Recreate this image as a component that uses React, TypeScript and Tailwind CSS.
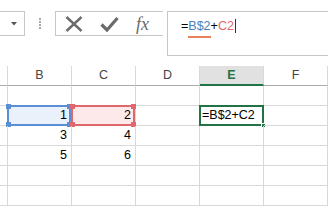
import React from 'react'

const font = { fontFamily: '"Liberation Sans", Arial, sans-serif' }

const cols = ['A', 'B', 'C', 'D', 'E', 'F']
const widths = ['w-[8px]', 'w-[64px]', 'w-[64px]', 'w-[64px]', 'w-[64px]', 'w-[64px]']

const rows: Record<number, string[]> = {
  1: ['', '', '', '', '', ''],
  2: ['', '1', '2', '', '=B$2+C2', ''],
  3: ['', '3', '4', '', '', ''],
  4: ['', '5', '6', '', '', ''],
  5: ['', '', '', '', '', ''],
  6: ['', '', '', '', '', ''],
}

function Corners({ color }: { color: string }) {
  return (
    <>
      <span className={`absolute -left-[3px] -top-[3px] h-[5px] w-[5px] ${color}`} />
      <span className={`absolute -right-[3px] -top-[3px] h-[5px] w-[5px] ${color}`} />
      <span className={`absolute -left-[3px] -bottom-[3px] h-[5px] w-[5px] ${color}`} />
      <span className={`absolute -right-[3px] -bottom-[3px] h-[5px] w-[5px] ${color}`} />
    </>
  )
}

function Cell({ row, col, value }: { row: number; col: number; value: string }) {
  const isFormula = value.startsWith('=')
  return (
    <div
      className={`relative flex h-[20px] shrink-0 items-center border-r border-b border-[#d9d9d9] ${widths[col]} ${
        isFormula ? 'justify-start pl-[2px]' : 'justify-end pr-[4px]'
      }`}
    >
      {row === 2 && col === 1 && (
        <div className="absolute -left-px -top-px bottom-[-1px] right-0 border-2 border-[#5b8fd3] bg-[#eaf1fb]">
          <Corners color="bg-[#5b8fd3]" />
        </div>
      )}
      {row === 2 && col === 2 && (
        <div className="absolute -left-px -top-px bottom-[-1px] right-0 border-2 border-[#e0676b] bg-[#fde9e9]">
          <Corners color="bg-[#e0676b]" />
        </div>
      )}
      {row === 2 && col === 4 && (
        <div className="absolute -left-px -top-px bottom-[-1px] right-[-1px] border-2 border-[#217346]">
          <span className="absolute -right-[4px] -bottom-[4px] h-[5px] w-[5px] border border-white bg-[#217346]" />
        </div>
      )}
      <span className="relative text-[12.5px] leading-none text-black">{value}</span>
    </div>
  )
}

export default function App() {
  return (
    <div className="h-[210px] w-[328px] overflow-hidden bg-white" style={font}>
      {/* formula bar */}
      <div className="flex h-[56px] items-start pt-[11px]">
        <div className="flex h-[25px] w-[25px] shrink-0 items-center justify-end border border-l-0 border-[#c6c6c6] pr-[7px]">
          <svg width="6" height="4" viewBox="0 0 6 4">
            <path d="M0 0h6L3 3.5z" fill="#555" />
          </svg>
        </div>
        <div className="ml-[14px] mt-[7px] flex w-[3px] flex-col gap-[1.5px]">
          {[0, 1, 2, 3].map((i) => (
            <span key={i} className="h-[1.5px] w-[1.5px] bg-[#a9a9a9]" />
          ))}
        </div>
        <div className="ml-[13px] flex h-[25px] w-[108px] shrink-0 items-center border border-r-0 border-[#c6c6c6]">
          <svg className="ml-[9px]" width="18" height="16" viewBox="0 0 18 16">
            <path d="M1.5 1 L16.5 15 M16.5 1 L1.5 15" stroke="#6b6b6b" strokeWidth="2.4" />
          </svg>
          <svg className="ml-[17px]" width="19" height="16" viewBox="0 0 19 16">
            <path d="M1.5 8.5 L7 14 L17.5 2" stroke="#6b6b6b" strokeWidth="3.2" fill="none" />
          </svg>
          <span
            className="ml-[17px] text-[18px] italic leading-none text-[#6b6b6b]"
            style={{ fontFamily: '"Liberation Serif", "Times New Roman", serif' }}
          >
            fx
          </span>
        </div>
        <div className="ml-[4px] flex h-[45px] flex-1 border border-r-0 border-[#c6c6c6] pl-[13px] pt-[6px]">
          <div className="flex h-[16px] items-center text-[12.5px] leading-none">
            <span className="text-black">=</span>
            <span className="relative text-[#4a7ebb]">
              B$2
              <span className="absolute left-0 right-0 -bottom-[6px] h-[2px] bg-[#e8825a]" />
            </span>
            <span className="text-black">+</span>
            <span className="text-[#e0676b]">C2</span>
            <span className="ml-[1px] h-[14px] w-px bg-[#333]" />
          </div>
        </div>
      </div>

      {/* grid */}
      <div className="pt-[10px]">
        <div className="flex h-[20px]">
          {cols.map((c, i) => {
            const active = c === 'E'
            return (
              <div
                key={c}
                className={`flex shrink-0 items-center justify-center border-r text-[12.5px] leading-none ${widths[i]} ${
                  active
                    ? 'border-b-2 border-r-[#d9d9d9] border-b-[#217346] bg-[#e1e1e1] font-bold text-[#217346]'
                    : 'border-b border-[#d9d9d9] border-b-[#ababab] text-[#444]'
                }`}
              >
                {i === 0 ? '' : c}
              </div>
            )
          })}
        </div>
        {[1, 2, 3, 4, 5, 6].map((r) => (
          <div key={r} className="flex">
            {rows[r].map((v, i) => (
              <Cell key={i} row={r} col={i} value={v} />
            ))}
          </div>
        ))}
      </div>
    </div>
  )
}
